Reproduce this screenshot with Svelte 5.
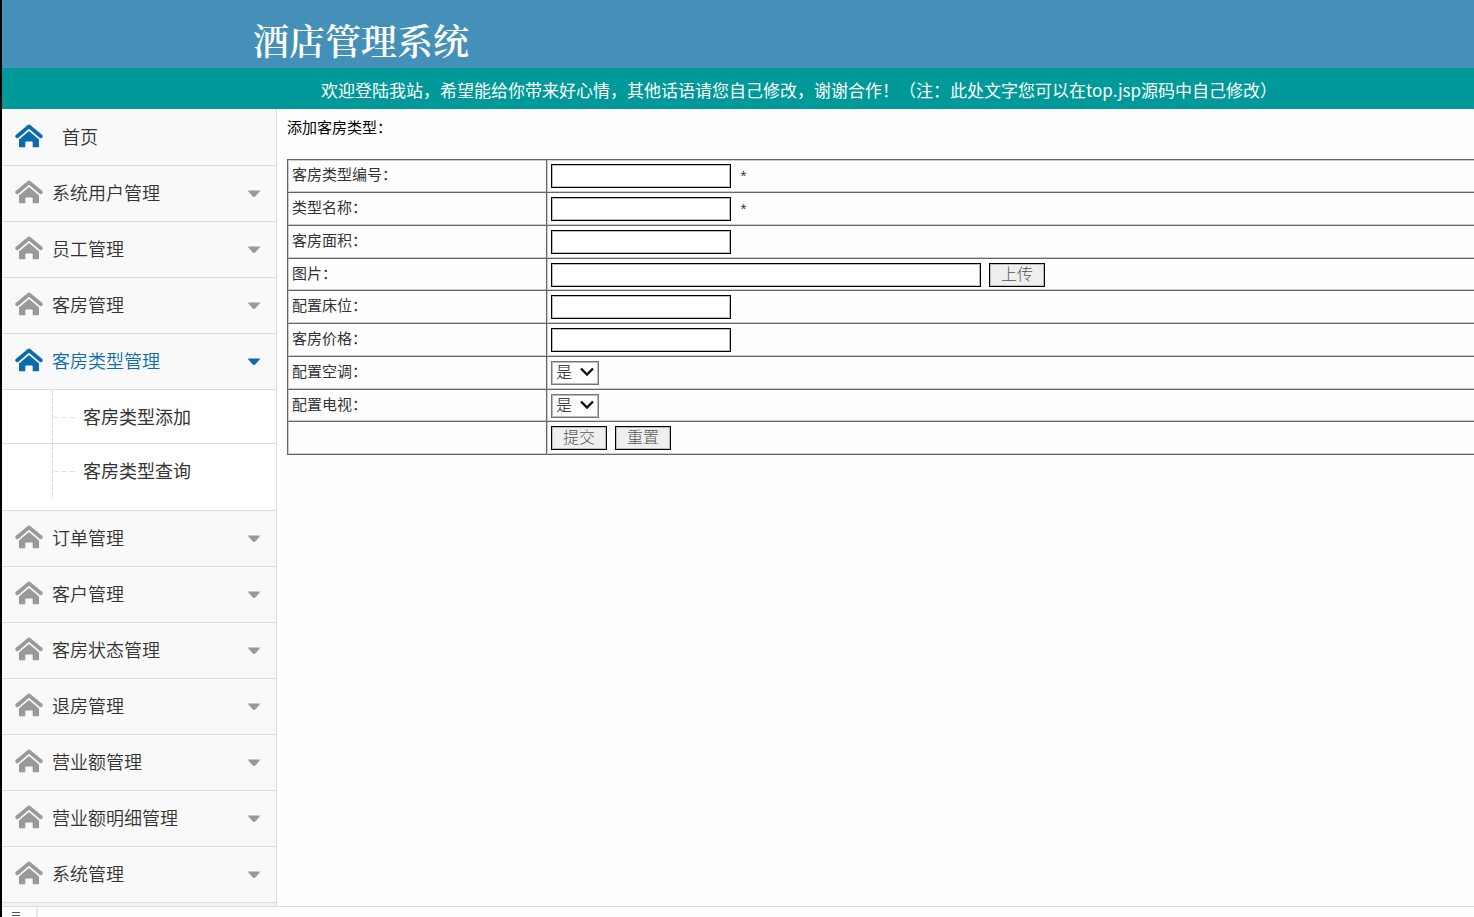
<script lang="ts">
  const before = ['系统用户管理', '员工管理', '客房管理']
  const after = ['订单管理', '客户管理', '客房状态管理', '退房管理', '营业额管理', '营业额明细管理', '系统管理']

  const menus = [
    ...before.map(name => ({ name, children: [] as string[] })),
    { name: '客房类型管理', children: ['客房类型添加', '客房类型查询'] },
    ...after.map(name => ({ name, children: [] as string[] })),
  ]

  const fields = [
    { id: 'bianhao', label: '客房类型编号：', type: 'text', required: true },
    { id: 'mingcheng', label: '类型名称：', type: 'text', required: true },
    { id: 'mianji', label: '客房面积：', type: 'text' },
    { id: 'tupian', label: '图片：', type: 'file', tight: true },
    { id: 'chuangwei', label: '配置床位：', type: 'text' },
    { id: 'jiage', label: '客房价格：', type: 'text' },
    { id: 'kongtiao', label: '配置空调：', type: 'select' },
    { id: 'dianshi', label: '配置电视：', type: 'select', tight: true },
  ]

  let openMenu = $state('客房类型管理')

  const toggle = (name: string) => {
    openMenu = openMenu === name ? '' : name
  }
</script>

{#snippet house()}
  <svg class="house" viewBox="0 0 28 24" aria-hidden="true">
    <path d="M2.200 12.300 14 2.400l11.800 9.900" fill="none" stroke="currentColor" stroke-width="3.8" stroke-linecap="round" stroke-linejoin="round" />
    <path d="M14 7 24 15.500v6.800q0 .9-.9.900h-5.400v-5q0-.8-.8-.8h-5.800q-.8 0-.8.800v5H4.900q-.9 0-.9-.9V15.500Z" fill="currentColor" />
  </svg>
{/snippet}

<div class="page">
  <header>
    <h1>酒店管理系统</h1>
  </header>
  <p class="welcome">欢迎登陆我站，希望能给你带来好心情，其他话语请您自己修改，谢谢合作！（注：此处文字您可以在top.jsp源码中自己修改）</p>

  <div class="body">
    <nav>
      <a class="home" href="#home">
        <span class="blue">{@render house()}</span>
        首页
      </a>
      {#each menus as menu}
        <button class="menu" class:open={menu.name === openMenu} onclick={() => toggle(menu.name)}>
          {@render house()}
          <span class="name">{menu.name}</span>
          <svg class="caret" viewBox="0 0 14 8" aria-hidden="true"><path d="M.500.500h13L8.500 6.300q-1.500 1.400-3 0Z" fill="currentColor" /></svg>
        </button>
        {#if menu.name === openMenu && menu.children.length}
          <ul>
            {#each menu.children as child}
              <li><a href="#child">{child}</a></li>
            {/each}
          </ul>
        {/if}
      {/each}
    </nav>

    <main>
      <form onsubmit={evt => evt.preventDefault()}>
        <h2>添加客房类型：</h2>
        <table>
          <tbody>
            {#each fields as field}
              <tr class:tight={field.tight}>
                <th scope="row"><label for={field.id}>{field.label}</label></th>
                <td>
                  <div class="cell">
                    {#if field.type === 'select'}
                      <div class="select">
                        <select id={field.id}>
                          <option>是</option>
                          <option>否</option>
                        </select>
                        <svg viewBox="0 0 14 10" aria-hidden="true"><path d="M1 1.500 7 7.500l6-6" fill="none" stroke="#111" stroke-width="2.4" /></svg>
                      </div>
                    {:else}
                      <input id={field.id} type="text" class:wide={field.type === 'file'} />
                    {/if}
                    {#if field.type === 'file'}
                      <button type="button">上传</button>
                    {/if}
                    {#if field.required}
                      <span class="star">*</span>
                    {/if}
                  </div>
                </td>
              </tr>
            {/each}
            <tr>
              <th></th>
              <td>
                <div class="cell">
                  <button type="submit">提交</button>
                  <button type="reset">重置</button>
                </div>
              </td>
            </tr>
          </tbody>
        </table>
      </form>
    </main>
  </div>

  <footer>
    <button class="list" aria-label="菜单"><i></i><i></i></button>
  </footer>
</div>

<style>
  :global(body) {
    margin: 0;
    background: #fefefe;
    overflow: hidden;
  }
  .page {
    height: 100vh;
    overflow: hidden;
    box-sizing: border-box;
    display: flex;
    flex-direction: column;
    border-left: 2px solid #000;
    font-family: 'Noto Sans CJK SC', sans-serif;
    color: #333;
  }
  header {
    flex: none;
    height: 68px;
    padding-left: 251px;
    background: #4490b9;
  }
  h1 {
    margin: 0;
    padding-top: 13px;
    font: 600 36px/54px 'Noto Serif CJK SC', 'Noto Sans CJK SC', serif;
    color: #fff;
  }
  .welcome {
    flex: none;
    margin: 0;
    padding-left: 122px;
    height: 41px;
    background: #099;
    color: #fff;
    font-size: 17px;
    line-height: 44px;
    text-align: center;
    white-space: nowrap;
  }
  .body {
    flex: none;
    display: flex;
  }
  nav {
    flex: none;
    width: 274px;
    border-right: 1px solid #ddd;
    padding-bottom: 3px;
    background: #f3f3f3;
  }
  .home,
  .menu {
    display: flex;
    align-items: center;
    box-sizing: border-box;
    width: 100%;
    height: 56px;
    border: 0;
    border-bottom: 1px solid #ddd;
    padding: 0 15px 3px 13px;
    background: #f9f9f9;
    color: #333;
    font: 350 18px/24px 'Noto Sans CJK SC', sans-serif;
    text-align: left;
    text-decoration: none;
    cursor: pointer;
  }
  .home {
    height: 57px;
    gap: 19px;
  }
  .blue {
    display: flex;
    color: #0b6cab;
  }
  .house {
    flex: none;
    width: 28px;
    height: 24px;
  }
  .menu {
    color: #999;
  }
  .name {
    flex: 1;
    margin-left: 9px;
    color: #333;
  }
  .caret {
    width: 14px;
    height: 8px;
    padding-top: 3px;
  }
  .open,
  .open .name {
    color: #0b6cab;
  }
  ul {
    margin: 0;
    padding: 0 0 13px;
    list-style: none;
    background: #fff;
    border-bottom: 1px solid #ddd;
  }
  li {
    display: flex;
    background:
      repeating-linear-gradient(#ddd 0 6px, #fff 6px 8px) 50px 0 / 1px 100% no-repeat,
      repeating-linear-gradient(90deg, #e2e2e2 0 5px, #fff 5px 8px) 52px 27px / 21px 1px no-repeat;
  }
  li + li {
    border-top: 1px solid #ddd;
  }
  li a {
    flex: 1;
    padding-left: 81px;
    font-size: 18px;
    line-height: 53px;
    color: #333;
    text-decoration: none;
  }
  main {
    flex: 1;
    min-width: 0;
    padding-left: 10px;
  }
  h2 {
    margin: 0;
    padding: 7px 0 21px;
    font-size: 15px;
    font-weight: 400;
    line-height: 22px;
    color: #000;
  }
  table {
    width: 100%;
    table-layout: fixed;
    border-collapse: collapse;
    border-top: 1px solid #666;
    border-left: 1px solid #666;
  }
  tr {
    height: 33px;
  }
  .tight {
    height: 32px;
  }
  th,
  td {
    padding: 0 4px;
    border-bottom: 1px solid #666;
    box-sizing: border-box;
    box-shadow: inset 1px -1px #ccc;
    font-size: 15px;
    font-weight: 400;
    line-height: 20px;
    text-align: left;
  }
  tr:first-child th,
  tr:first-child td {
    box-shadow: inset 1px -1px #ccc, inset 0 1px #ccc;
  }
  th {
    width: 259px;
    border-right: 1px solid #666;
    padding-bottom: 4px;
  }
  .cell {
    display: flex;
    align-items: center;
    gap: 8px;
  }
  input,
  .cell button,
  select {
    box-sizing: border-box;
    height: 24px;
    margin: 0;
    border: 1px solid #000;
    border-radius: 0;
    outline: 1px solid #bbb;
    outline-offset: -2px;
    font: 300 16px/18px 'Noto Sans CJK SC', sans-serif;
  }
  input {
    width: 180px;
    padding: 0 4px;
  }
  .wide {
    width: 430px;
  }
  .cell button {
    width: 56px;
    padding: 0 0 4px;
    background: #efefef;
    color: #555;
  }
  .select {
    position: relative;
    display: flex;
  }
  select {
    appearance: none;
    width: 48px;
    padding: 0 0 4px 4px;
    border-color: #767676;
    background: #fff;
    color: #111;
  }
  .select svg {
    position: absolute;
    right: 5px;
    top: 6px;
    width: 14px;
    height: 10px;
    pointer-events: none;
  }
  .star {
    padding-top: 6px;
    font-family: 'Liberation Mono', monospace;
    font-size: 15px;
  }
  footer {
    flex: 1;
    border-top: 1px solid #ddd;
  }
  .list {
    display: flex;
    flex-direction: column;
    gap: 2px;
    width: 36px;
    height: 28px;
    padding: 5px 10px;
    border: 0;
    border-right: 2px solid #e8e8e8;
    background: none;
  }
  .list i {
    width: 8px;
    height: 1px;
    background: #555;
  }
</style>
